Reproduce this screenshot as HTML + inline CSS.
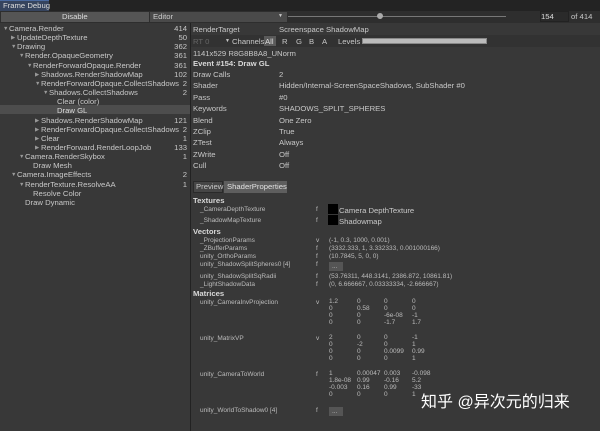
<!DOCTYPE html>
<html><head><meta charset="utf-8"><style>
*{margin:0;padding:0;box-sizing:border-box}
body{width:600px;height:431px;background:#383838;font-family:"Liberation Sans",sans-serif;color:#c8c8c8;font-size:7.7px;position:relative;overflow:hidden}
.a{position:absolute;white-space:nowrap;line-height:9px}
.r{position:absolute;left:0;width:190px;height:9px}
.n{position:absolute;right:3px;top:0}
.ar{position:absolute;top:2px;font-size:5.5px;line-height:6px;color:#999}
.b{font-weight:bold;color:#d8d8d8}
.s{font-size:6.5px;color:#bbb}
</style></head><body>
<div style="position:absolute;left:0;top:0;width:600px;height:11px;background:#232323"></div>
<div style="position:absolute;left:0;top:0;width:49px;height:11px;background:#36445e;border-top:1px solid #4a6aa0"></div>
<div class="a" style="left:3px;top:1px;color:#ddd">Frame Debug</div>
<div style="position:absolute;left:0;top:11px;width:600px;height:12px;background:#2e2e2e"></div>
<div style="position:absolute;left:1px;top:12px;width:148px;height:10px;background:#555"></div>
<div class="a" style="left:62px;top:12px;color:#ddd">Disable</div>
<div style="position:absolute;left:150px;top:12px;width:137px;height:10px;background:#4a4a4a"></div>
<div class="a" style="left:153px;top:12px;color:#ccc">Editor</div>
<div class="a" style="left:278px;top:12px;font-size:5px">▼</div>
<div style="position:absolute;left:288px;top:16px;width:218px;height:1px;background:#777"></div>
<div style="position:absolute;left:377px;top:13px;width:6px;height:6px;border-radius:50%;background:#aaa"></div>
<div style="position:absolute;left:540px;top:11px;width:29px;height:11px;background:#2a2a2a;border:1px solid #222"></div>
<div class="a" style="left:541px;top:12px;color:#ddd">154</div>
<div class="a" style="left:571px;top:12px">of 414</div>
<div style="position:absolute;left:190px;top:23px;width:1px;height:408px;background:#222"></div>

<div class="r" style="top:105px;background:#4d4d4d"></div>
<div style="position:absolute;top:24px;left:0">
<div class="r" style="top:0"><span class="ar" style="left:3px">▼</span><span class="a" style="left:9px">Camera.Render</span><span class="n">414</span></div>
<div class="r" style="top:9.15px"><span class="ar" style="left:11px">▶</span><span class="a" style="left:17px">UpdateDepthTexture</span><span class="n">50</span></div>
<div class="r" style="top:18.3px"><span class="ar" style="left:11px">▼</span><span class="a" style="left:17px">Drawing</span><span class="n">362</span></div>
<div class="r" style="top:27.45px"><span class="ar" style="left:19px">▼</span><span class="a" style="left:25px">Render.OpaqueGeometry</span><span class="n">361</span></div>
<div class="r" style="top:36.6px"><span class="ar" style="left:27px">▼</span><span class="a" style="left:33px">RenderForwardOpaque.Render</span><span class="n">361</span></div>
<div class="r" style="top:45.75px"><span class="ar" style="left:35px">▶</span><span class="a" style="left:41px">Shadows.RenderShadowMap</span><span class="n">102</span></div>
<div class="r" style="top:54.9px"><span class="ar" style="left:35px">▼</span><span class="a" style="left:41px">RenderForwardOpaque.CollectShadows</span><span class="n">2</span></div>
<div class="r" style="top:64.05px"><span class="ar" style="left:43px">▼</span><span class="a" style="left:49px">Shadows.CollectShadows</span><span class="n">2</span></div>
<div class="r" style="top:73.2px"><span class="a" style="left:57px">Clear (color)</span></div>
<div class="r" style="top:82.35px"><span class="a" style="left:57px;color:#ddd">Draw GL</span></div>
<div class="r" style="top:91.5px"><span class="ar" style="left:35px">▶</span><span class="a" style="left:41px">Shadows.RenderShadowMap</span><span class="n">121</span></div>
<div class="r" style="top:100.65px"><span class="ar" style="left:35px">▶</span><span class="a" style="left:41px">RenderForwardOpaque.CollectShadows</span><span class="n">2</span></div>
<div class="r" style="top:109.8px"><span class="ar" style="left:35px">▶</span><span class="a" style="left:41px">Clear</span><span class="n">1</span></div>
<div class="r" style="top:118.95px"><span class="ar" style="left:35px">▶</span><span class="a" style="left:41px">RenderForward.RenderLoopJob</span><span class="n">133</span></div>
<div class="r" style="top:128.1px"><span class="ar" style="left:19px">▼</span><span class="a" style="left:25px">Camera.RenderSkybox</span><span class="n">1</span></div>
<div class="r" style="top:137.25px"><span class="a" style="left:33px">Draw Mesh</span></div>
<div class="r" style="top:146.4px"><span class="ar" style="left:11px">▼</span><span class="a" style="left:17px">Camera.ImageEffects</span><span class="n">2</span></div>
<div class="r" style="top:155.55px"><span class="ar" style="left:19px">▼</span><span class="a" style="left:25px">RenderTexture.ResolveAA</span><span class="n">1</span></div>
<div class="r" style="top:164.7px"><span class="a" style="left:33px">Resolve Color</span></div>
<div class="r" style="top:173.85px"><span class="a" style="left:25px">Draw Dynamic</span></div>
</div>

<div class="a" style="left:193px;top:25px">RenderTarget</div>
<div class="a" style="left:279px;top:25px">Screenspace ShadowMap</div>
<div style="position:absolute;left:191px;top:35px;width:409px;height:12px;background:#323232"></div>
<div class="a" style="left:193px;top:37px;color:#666">RT 0</div>
<div class="a" style="left:225px;top:37px;font-size:5px">▼</div>
<div class="a" style="left:232px;top:37px">Channels</div>
<div style="position:absolute;left:264px;top:36px;width:12px;height:10px;background:#5a5a5a"></div>
<div class="a" style="left:265px;top:37px;color:#ddd">All</div>
<div class="a" style="left:282px;top:37px">R</div>
<div class="a" style="left:296px;top:37px">G</div>
<div class="a" style="left:309px;top:37px">B</div>
<div class="a" style="left:322px;top:37px">A</div>
<div class="a" style="left:338px;top:37px">Levels</div>
<div style="position:absolute;left:362px;top:38px;width:125px;height:6px;background:#bbb;border:1px solid #888"></div>
<div class="a" style="left:193px;top:49px">1141x529 R8G8B8A8_UNorm</div>
<div class="a b" style="left:193px;top:59px">Event #154: Draw GL</div>
<div style="position:absolute;top:70px;left:0">
<div class="a" style="left:193px;top:0">Draw Calls</div><div class="a" style="left:279px;top:0">2</div>
<div class="a" style="left:193px;top:11.4px">Shader</div><div class="a" style="left:279px;top:11.4px">Hidden/Internal-ScreenSpaceShadows, SubShader #0</div>
<div class="a" style="left:193px;top:22.8px">Pass</div><div class="a" style="left:279px;top:22.8px">#0</div>
<div class="a" style="left:193px;top:34.2px">Keywords</div><div class="a" style="left:279px;top:34.2px">SHADOWS_SPLIT_SPHERES</div>
<div class="a" style="left:193px;top:45.6px">Blend</div><div class="a" style="left:279px;top:45.6px">One Zero</div>
<div class="a" style="left:193px;top:57px">ZClip</div><div class="a" style="left:279px;top:57px">True</div>
<div class="a" style="left:193px;top:68.4px">ZTest</div><div class="a" style="left:279px;top:68.4px">Always</div>
<div class="a" style="left:193px;top:79.8px">ZWrite</div><div class="a" style="left:279px;top:79.8px">Off</div>
<div class="a" style="left:193px;top:91.2px">Cull</div><div class="a" style="left:279px;top:91.2px">Off</div>
</div>
<div style="position:absolute;left:193px;top:181px;width:30px;height:12px;background:#464646;border:1px solid #2a2a2a"></div>
<div class="a" style="left:196px;top:182px">Preview</div>
<div style="position:absolute;left:224px;top:181px;width:63px;height:12px;background:#5e5e5e"></div>
<div class="a" style="left:227px;top:182px;color:#e0e0e0">ShaderProperties</div>

<div class="a b" style="left:193px;top:196px">Textures</div>
<div class="a s" style="left:200px;top:205px">_CameraDepthTexture</div><div class="a s" style="left:316px;top:205px">f</div>
<div style="position:absolute;left:328px;top:204px;width:10px;height:10px;background:#000"></div>
<div class="a" style="left:339px;top:206px">Camera DepthTexture</div>
<div class="a s" style="left:200px;top:216px">_ShadowMapTexture</div><div class="a s" style="left:316px;top:216px">f</div>
<div style="position:absolute;left:328px;top:215px;width:10px;height:10px;background:#000"></div>
<div class="a" style="left:339px;top:217px">Shadowmap</div>
<div class="a b" style="left:193px;top:227px">Vectors</div>
<div class="a s" style="left:200px;top:236px">_ProjectionParams</div><div class="a s" style="left:316px;top:236px">v</div><div class="a s" style="left:329px;top:236px">(-1, 0.3, 1000, 0.001)</div>
<div class="a s" style="left:200px;top:244px">_ZBufferParams</div><div class="a s" style="left:316px;top:244px">f</div><div class="a s" style="left:329px;top:244px">(3332.333, 1, 3.332333, 0.001000166)</div>
<div class="a s" style="left:200px;top:252px">unity_OrthoParams</div><div class="a s" style="left:316px;top:252px">f</div><div class="a s" style="left:329px;top:252px">(10.7845, 5, 0, 0)</div>
<div class="a s" style="left:200px;top:260px">unity_ShadowSplitSpheres0 [4]</div><div class="a s" style="left:316px;top:260px">f</div>
<div style="position:absolute;left:329px;top:262px;width:14px;height:9px;background:#555"></div><div class="a s" style="left:332px;top:262px">...</div>
<div class="a s" style="left:200px;top:272px">unity_ShadowSplitSqRadii</div><div class="a s" style="left:316px;top:272px">f</div><div class="a s" style="left:329px;top:272px">(53.76311, 448.3141, 2386.872, 10861.81)</div>
<div class="a s" style="left:200px;top:280px">_LightShadowData</div><div class="a s" style="left:316px;top:280px">f</div><div class="a s" style="left:329px;top:280px">(0, 6.666667, 0.03333334, -2.666667)</div>
<div class="a b" style="left:193px;top:289px">Matrices</div>

<div class="a s" style="left:200px;top:298px">unity_CameraInvProjection</div><div class="a s" style="left:316px;top:298px">v</div>
<div class="a s" style="left:329px;top:298px;line-height:7px">1.2<br>0<br>0<br>0</div>
<div class="a s" style="left:357px;top:298px;line-height:7px">0<br>0.58<br>0<br>0</div>
<div class="a s" style="left:384px;top:298px;line-height:7px">0<br>0<br>-6e-08<br>-1.7</div>
<div class="a s" style="left:412px;top:298px;line-height:7px">0<br>0<br>-1<br>1.7</div>

<div class="a s" style="left:200px;top:334px">unity_MatrixVP</div><div class="a s" style="left:316px;top:334px">v</div>
<div class="a s" style="left:329px;top:334px;line-height:7px">2<br>0<br>0<br>0</div>
<div class="a s" style="left:357px;top:334px;line-height:7px">0<br>-2<br>0<br>0</div>
<div class="a s" style="left:384px;top:334px;line-height:7px">0<br>0<br>0.0099<br>0</div>
<div class="a s" style="left:412px;top:334px;line-height:7px">-1<br>1<br>0.99<br>1</div>

<div class="a s" style="left:200px;top:370px">unity_CameraToWorld</div><div class="a s" style="left:316px;top:370px">f</div>
<div class="a s" style="left:329px;top:370px;line-height:7px">1<br>1.8e-08<br>-0.003<br>0</div>
<div class="a s" style="left:357px;top:370px;line-height:7px">0.00047<br>0.99<br>0.16<br>0</div>
<div class="a s" style="left:384px;top:370px;line-height:7px">0.003<br>-0.16<br>0.99<br>0</div>
<div class="a s" style="left:412px;top:370px;line-height:7px">-0.098<br>5.2<br>-33<br>1</div>

<div class="a s" style="left:200px;top:406px">unity_WorldToShadow0 [4]</div><div class="a s" style="left:316px;top:406px">f</div>
<div style="position:absolute;left:329px;top:407px;width:14px;height:9px;background:#555"></div><div class="a s" style="left:332px;top:407px">...</div>

<div class="a" style="left:421px;top:393px;font-size:16px;line-height:20px;color:#fff;font-family:'Liberation Sans','Noto Sans CJK SC',sans-serif">知乎 @异次元的归来</div>
</body></html>
